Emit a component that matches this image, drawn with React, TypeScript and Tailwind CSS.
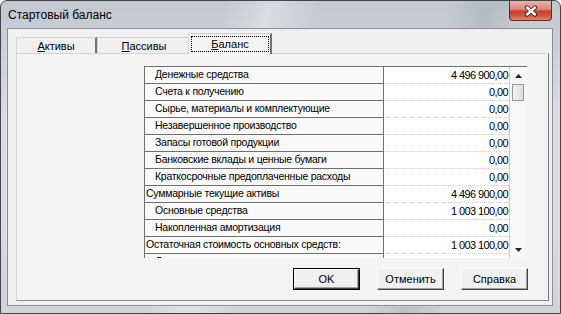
import React from "react";

type Row = { label: string; value: string; indent: boolean };

const rows: Row[] = [
  { label: "Денежные средства", value: "4 496 900,00", indent: true },
  { label: "Счета к получению", value: "0,00", indent: true },
  { label: "Сырье, материалы и комплектующие", value: "0,00", indent: true },
  { label: "Незавершенное производство", value: "0,00", indent: true },
  { label: "Запасы готовой продукции", value: "0,00", indent: true },
  { label: "Банковские вклады и ценные бумаги", value: "0,00", indent: true },
  { label: "Краткосрочные предоплаченные расходы", value: "0,00", indent: true },
  { label: "Суммарные текущие активы", value: "4 496 900,00", indent: false },
  { label: "Основные средства", value: "1 003 100,00", indent: true },
  { label: "Накопленная амортизация", value: "0,00", indent: true },
  { label: "Остаточная стоимость основных средств:", value: "1 003 100,00", indent: false },
  { label: "Долгосрочные активы", value: "0,00", indent: true },
];

function CloseButton() {
  return (
    <div className="absolute right-[8px] top-0 flex h-[20px] w-[43px] items-center justify-center rounded-b-[4px] border border-t-0 border-[#6a2a20] bg-[linear-gradient(180deg,#eab3a8_0%,#dd8a7c_42%,#c4402c_55%,#cf5a45_80%,#e08a70_100%)]">
      <svg width="16" height="12" viewBox="0 0 16 12">
        <path d="M4 2.5 L12 9.5 M12 2.5 L4 9.5" stroke="#4a1a14" strokeWidth="4.2" strokeLinecap="round" />
        <path d="M4 2.5 L12 9.5 M12 2.5 L4 9.5" stroke="#ffffff" strokeWidth="2.4" strokeLinecap="round" />
      </svg>
    </div>
  );
}

function Btn({ label, def }: { label: string; def?: boolean }) {
  const inner = (
    <div className="flex h-full w-full items-center justify-center border border-b-[#404040] border-l-white border-r-[#404040] border-t-white bg-[#f0f0f0] text-[11px] text-black shadow-[inset_-1px_-1px_0_#a0a0a0]">
      {label}
    </div>
  );
  if (def) {
    return <div className="h-[22px] w-[67px] border border-black">{inner}</div>;
  }
  return <div className="h-[22px] w-[67px]">{inner}</div>;
}

function ScrollBar() {
  return (
    <div className="flex w-[18px] flex-col border-l border-[#cfcfcf] bg-[#f7f7f7]">
      <div className="flex h-[17px] shrink-0 items-center justify-center">
        <svg width="7" height="4" viewBox="0 0 7 4">
          <path d="M3.5 0 L7 4 L0 4 Z" fill="#222" />
        </svg>
      </div>
      <div className="ml-[2px] mr-[3px] h-[17px] shrink-0 border border-[#9a9a9a] bg-[linear-gradient(90deg,#f4f4f4,#dcdcdc)]" />
      <div className="flex-1" />
      <div className="flex h-[17px] shrink-0 items-center justify-center">
        <svg width="7" height="4" viewBox="0 0 7 4">
          <path d="M0 0 L7 0 L3.5 4 Z" fill="#222" />
        </svg>
      </div>
    </div>
  );
}

export default function App() {
  return (
    <div className="h-[314px] w-[561px] overflow-hidden bg-white font-['Liberation_Sans',Arial,sans-serif] text-black">
      <div className="relative flex h-full w-full flex-col rounded-t-[7px] border border-[#41464d] bg-[linear-gradient(105deg,transparent_0%,transparent_35%,rgba(255,255,255,0.35)_42%,transparent_50%,transparent_70%,rgba(150,158,168,0.35)_76%,transparent_82%),linear-gradient(180deg,#c2c8cf_0%,#d8dce1_35%,#dadee2_70%,#cfd3d8_100%)] pb-[7px] pl-[6px] pr-[7px]">
        <div className="flex h-[27px] items-center pl-[1px] pt-[1px] text-[12px] text-black">Стартовый баланс</div>
        <CloseButton />

        <div className="flex flex-1 flex-col border border-[#8a9098] bg-[#f0f0f0] pb-[4px] pl-[8px] pr-[3px] pt-[4px]">
          <div className="flex h-[20px] items-end">
            <div className="flex h-[16px] w-[81px] items-center justify-center rounded-tl-[2px] border-l border-r-2 border-t border-l-[#d4d4d4] border-r-[#727272] border-t-[#d4d4d4] pt-[1px] text-[11px]">
              <span>
                <span className="underline">А</span>ктивы
              </span>
            </div>
            <div className="flex h-[16px] w-[93px] items-center justify-center border-l border-t border-[#d4d4d4] pt-[1px] text-[11px]">
              <span>
                <span className="underline">П</span>ассивы
              </span>
            </div>
            <div className="relative z-10 -mb-[1px] -ml-[2px] flex h-[21px] w-[84px] rounded-tl-[2px] border-l border-r-2 border-t border-l-[#d4d4d4] border-r-[#727272] border-t-[#d4d4d4] bg-[#f4f4f4] pb-[2px] pl-[2px] pr-[1px] pt-[2px] text-[11px]">
              <div className="flex h-full w-full items-center justify-center border border-dotted border-black">
                <span>
                  <span className="underline">Б</span>аланс
                </span>
              </div>
            </div>
          </div>

          <div className="flex flex-1 flex-col border-b border-l border-r border-t border-b-[#8a8a8a] border-l-[#d4d4d4] border-r-[#7a7a7a] border-t-[#d4d4d4] bg-[#f4f4f4]">
            <div className="ml-[127px] mt-[12px] flex h-[192px] w-[383px] overflow-hidden border-l border-t border-[#707070] bg-white">
              <div className="flex w-[364px] flex-col">
                {rows.map((r, i) => (
                  <div key={i} className="flex h-[17px] shrink-0">
                    <div
                      className={
                        r.indent
                          ? "flex w-[239px] items-center overflow-hidden whitespace-nowrap border-b border-r border-[#707070] bg-[#f9f9f9] pl-[10px] text-[10.5px] tracking-[-0.25px]"
                          : "flex w-[239px] items-center overflow-hidden whitespace-nowrap border-b border-r border-[#707070] bg-[#f9f9f9] pl-[1px] text-[10.5px] tracking-[-0.25px]"
                      }
                    >
                      {r.label}
                    </div>
                    <div className="flex w-[125px] items-center justify-end whitespace-nowrap border-b border-dotted border-b-[#d4d4d4] bg-white pr-[1px] text-[11px] tracking-[-0.6px]">
                      {r.value}
                    </div>
                  </div>
                ))}
              </div>
              <ScrollBar />
            </div>

            <div className="ml-[276px] mt-[10px] flex gap-[17px]">
              <Btn label="OK" def />
              <Btn label="Отменить" />
              <Btn label="Справка" />
            </div>
          </div>
        </div>
      </div>
    </div>
  );
}
